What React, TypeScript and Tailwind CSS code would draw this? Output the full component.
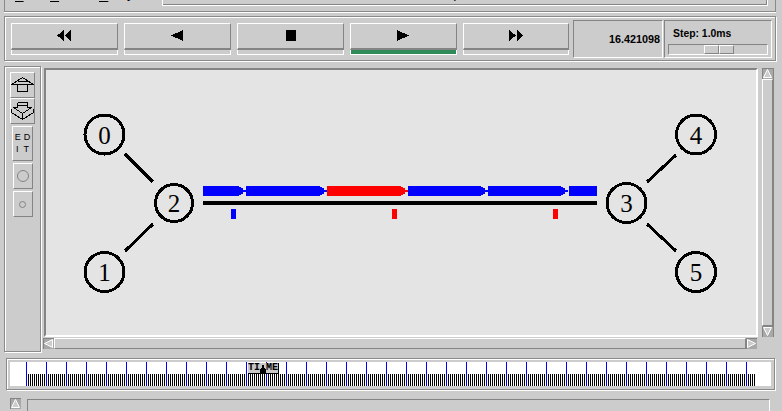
const raised = "border border-t-white border-l-white border-b-[#848484] border-r-[#848484]";
const sunken = "border border-t-[#848484] border-l-[#848484] border-b-white border-r-white";
const groove = "border border-[#8a8a8a] shadow-[inset_1px_1px_0_#ffffff,1px_1px_0_#ffffff]";

const blueTicks = Array.from({ length: 37 }, (_, i) => 26 + i * 20);
const blackTicks = Array.from({ length: 364 }, (_, i) => 28 + i * 2);

function TransportButton({ active, children, w }: { active?: boolean; children: React.ReactNode; w: string }) {
  return (
    <div className={`flex h-[32px] flex-col ${w}`}>
      <div className="flex h-[27px] items-center justify-center border-b-2 border-l border-r border-t border-t-white border-l-white border-b-[#848484] border-r-[#848484]">
        {children}
      </div>
      <div
        className={
          active
            ? "h-[5px] border-b border-l border-r border-white bg-[#2e8b57]"
            : "h-[5px] border-b border-l border-r border-white"
        }
      />
    </div>
  );
}

function Arrow({ dir }: { dir: "up" | "down" | "left" | "right" }) {
  const points = {
    up: "5.5,1.5 1.5,9.5 9.5,9.5",
    down: "1.5,1.5 9.5,1.5 5.5,9.5",
    left: "1.5,5.5 9.5,1.5 9.5,9.5",
    right: "1.5,1.5 1.5,9.5 9.5,5.5",
  }[dir];
  return (
    <div className="h-[11px] w-[11px] shrink-0 border-l border-t border-[#848484] bg-[#a8a8a8]">
      <svg width="10" height="10" viewBox="1 1 10 10" className="block">
        <polygon points={points} fill="#cccccc" stroke="#ffffff" />
      </svg>
    </div>
  );
}

function Packet({ x, w, color }: { x: number; w: number; color: string }) {
  const e = x + w;
  return (
    <polygon
      points={`${x},186 ${e - 7},186 ${e - 7},187 ${e - 5},187 ${e - 5},188 ${e - 3},188 ${e - 3},190 ${e - 1},190 ${e},191 ${e - 1},192 ${e - 3},192 ${e - 3},194 ${e - 5},194 ${e - 5},195 ${e - 7},195 ${e - 7},196 ${x},196`}
      fill={color}
    />
  );
}

function Node({ cx, cy, label, r = 19.5 }: { cx: number; cy: number; label: string; r?: number }) {
  return (
    <g>
      <circle cx={cx} cy={cy} r={r} fill="none" stroke="#000" strokeWidth={3} shapeRendering="crispEdges" />
      <text
        x={cx}
        y={cy + 9}
        textAnchor="middle"
        fontSize={25}
        fontFamily="'Liberation Serif', serif"
        fill="#000"
      >
        {label}
      </text>
    </g>
  );
}

export default function App() {
  return (
    <div className="flex h-[411px] w-[782px] flex-col overflow-hidden bg-[#cccccc] font-['Liberation_Sans',sans-serif] text-black">
      {/* menu strip, mostly scrolled off the top */}
      <div className="ml-[4px] flex h-[12px] w-[772px] shrink-0 overflow-hidden border-b border-l border-r border-[#8a8a8a] shadow-[0_1px_0_#ffffff]">
        <div className="h-[6px] w-[157px] shrink-0 overflow-hidden text-[14px] leading-[16px]">
          <div className="-mt-[15px] flex underline-offset-[3px]">
            <span className="ml-[10px] w-[35px]"><span className="underline">F</span>ile</span>
            <span className="w-[49px]"><span className="underline">V</span>iews</span>
            <span><span className="underline">A</span>nalysis</span>
          </div>
        </div>
        <div className="h-[6px] w-[606px] overflow-hidden border-b border-l border-r border-b-white border-l-white border-r-white text-center text-[14px] leading-[16px] shadow-[inset_-1px_-1px_0_#848484]">
          <div className="-mt-[15px]">tmp.nam</div>
        </div>
      </div>

      {/* transport bar */}
      <div className={`ml-[4px] mt-[4px] flex h-[45px] w-[772px] shrink-0 items-center pl-[6px] ${groove}`}>
        <div className="flex gap-[6px]">
          <TransportButton w="w-[107px]">
            <svg width="15" height="11" viewBox="0 0 15 11" shapeRendering="crispEdges">
              <polygon points="7,0 7,11 0,5.5" fill="#000" />
              <polygon points="14,0 14,11 8,5.5" fill="#000" />
            </svg>
          </TransportButton>
          <TransportButton w="w-[107px]">
            <svg width="13" height="11" viewBox="0 0 13 11" shapeRendering="crispEdges"><polygon points="12,0 12,11 0,5.5" fill="#000" /></svg>
          </TransportButton>
          <TransportButton w="w-[107px]">
            <div className="h-[11px] w-[10px] bg-black" />
          </TransportButton>
          <TransportButton w="w-[107px]" active>
            <svg width="13" height="11" viewBox="0 0 13 11" shapeRendering="crispEdges"><polygon points="0,0 0,11 12,5.5" fill="#000" /></svg>
          </TransportButton>
          <TransportButton w="w-[106px]">
            <svg width="15" height="11" viewBox="0 0 15 11" shapeRendering="crispEdges">
              <polygon points="0,0 0,11 7,5.5" fill="#000" />
              <polygon points="8,0 8,11 14,5.5" fill="#000" />
            </svg>
          </TransportButton>
        </div>
        <div className={`ml-[4px] flex h-[38px] w-[90px] items-center justify-end pr-[2px] pt-[1px] text-[10.8px] font-bold ${sunken}`}>
          16.421098
        </div>
        <div className={`ml-[1px] h-[38px] w-[108px] ${sunken}`}>
          <div className="ml-[8px] mt-[7px] text-[10.4px] font-bold leading-[12px]">Step: 1.0ms</div>
          <div className={`ml-[3px] mt-[4px] flex h-[11px] w-[100px] ${sunken}`}>
            <div className="ml-[35px] flex h-[9px]">
              <div className={`h-[9px] w-[15px] ${raised}`} />
              <div className={`h-[9px] w-[15px] ${raised}`} />
            </div>
          </div>
        </div>
      </div>

      {/* main area */}
      <div className="ml-[4px] mt-[5px] flex h-[287px] shrink-0">
        <div className={`flex h-[286px] w-[37px] shrink-0 flex-col items-center pt-[5px] ${groove}`}>
          <div className={`flex h-[26px] w-[25px] items-center justify-center ${raised}`}>
            <svg width="23" height="16" viewBox="0 0 23 16" shapeRendering="crispEdges">
              <path d="M11.5 0.5 L0.5 7.5 L6.5 7.5 M11.5 0.5 L22.5 7.5 L16.5 7.5 M6.5 4.5 L16.5 4.5 M0.5 7.5 L22.5 7.5 M6.5 7.5 L6.5 14.5 L16.5 14.5 L16.5 7.5" fill="none" stroke="#000" strokeWidth={1} />
            </svg>
          </div>
          <div className={`flex h-[26px] w-[25px] items-center justify-center ${raised}`}>
            <svg width="23" height="18" viewBox="0 0 23 18" shapeRendering="crispEdges">
              <path d="M6.5 0.5 L16.5 0.5 M6.5 3.5 L16.5 3.5 M6.5 0.5 L6.5 5.5 L2.5 5.5 L11.5 11.5 L20.5 5.5 L16.5 5.5 L16.5 0.5 M0.5 6.5 L0.5 10.5 L11.5 17.5 L22.5 10.5 L22.5 6.5 M11.5 11.5 L11.5 17.5" fill="none" stroke="#000" strokeWidth={1} />
            </svg>
          </div>
          <div className={`mt-[2px] flex h-[35px] w-[21px] flex-col items-center justify-center gap-[3px] text-[9px] leading-[9px] ${raised}`}>
            <div className="flex gap-[3px]"><span>E</span><span>D</span></div>
            <div className="flex gap-[5px]"><span>I</span><span>T</span></div>
          </div>
          <div className={`mt-[2px] flex h-[26px] w-[20px] items-center justify-center ${raised}`}>
            <div className="h-[12px] w-[12px] rounded-full border border-[#848484]" />
          </div>
          <div className={`mt-[2px] flex h-[26px] w-[20px] items-center justify-center ${raised}`}>
            <div className="h-[7px] w-[7px] rounded-full border border-[#848484]" />
          </div>
        </div>

        <div className="ml-[2px] mt-[2px] flex flex-col">
          <div className="flex">
            <div className="ml-[1px] h-[269px] w-[714px] overflow-hidden border-2 border-b-white border-l-[#848484] border-r-white border-t-[#848484] bg-[#e4e4e4]">
              <svg width="710" height="265" viewBox="46 70 710 265" className="block">
                <g shapeRendering="crispEdges">
                  <g stroke="#000" strokeWidth={3}>
                    <line x1={125} y1={154} x2={153} y2={182} />
                    <line x1={153} y1={224} x2={125} y2={251} />
                    <line x1={647} y1={182} x2={676} y2={155} />
                    <line x1={647} y1={224} x2={676} y2={251} />
                  </g>
                  <rect x={203} y={201} width={394} height={4} fill="#000" />
                  <Packet x={203} w={43} color="#0000ff" />
                  <Packet x={246} w={81} color="#0000ff" />
                  <Packet x={327} w={81} color="#ff0000" />
                  <Packet x={408} w={80} color="#0000ff" />
                  <Packet x={488} w={80} color="#0000ff" />
                  <rect x={569} y={186} width={28} height={10} fill="#0000ff" />
                  <rect x={231} y={209} width={5} height={10} fill="#0000ff" />
                  <rect x={392} y={209} width={5} height={10} fill="#ff0000" />
                  <rect x={553} y={209} width={5} height={10} fill="#ff0000" />
                </g>
                <Node cx={104.5} cy={134.5} label="0" />
                <Node cx={104.5} cy={272} label="1" />
                <Node cx={174} cy={203} label="2" r={18.5} />
                <Node cx={626.5} cy={203} label="3" />
                <Node cx={696} cy={134.5} label="4" />
                <Node cx={696} cy={272} label="5" />
              </svg>
            </div>
            <div className="ml-[4px] flex h-[269px] w-[12px] flex-col items-center border-r border-[#848484]">
              <Arrow dir="up" />
              <div className={`w-[11px] flex-1 ${raised}`} />
              <Arrow dir="down" />
            </div>
          </div>
          <div className="mt-[1px] flex h-[11px] w-[714px] border-b border-[#848484]">
            <Arrow dir="left" />
            <div className={`h-[11px] flex-1 ${raised}`} />
            <Arrow dir="right" />
          </div>
        </div>
      </div>

      {/* time slider */}
      <div className={`ml-[6px] mt-[5px] h-[32px] w-[769px] shrink-0 p-[3px] ${groove}`}>
        <div className="h-[24px] w-[761px] overflow-hidden bg-white">
          <div className="relative h-[24px] w-[761px]">
            <svg width="761" height="24" viewBox="10 362 761 24" className="block" shapeRendering="crispEdges">
              {blackTicks.map((x) => (
                <rect key={x} x={x} y={374} width={1} height={12} fill="#000" />
              ))}
              {blueTicks.map((x) => (
                <rect key={x} x={x} y={362} width={1} height={24} fill="#0000ff" />
              ))}
            </svg>
            <div className="absolute left-[238px] top-[1px] flex h-[11px] w-[31px] items-center justify-between overflow-hidden border-b border-r border-black bg-[#c8c8c8] font-['Liberation_Mono',monospace] text-[10px] font-bold leading-none">
              <span>TI</span>
              <svg width="6" height="10" viewBox="0 0 6 10" shapeRendering="crispEdges" className="shrink-0">
                <polygon points="3,0 4,4 6,7 6,10 0,10 0,7 2,4" fill="#000" />
              </svg>
              <span>ME</span>
            </div>
          </div>
        </div>
      </div>

      {/* bottom scrollbar, cut off by the window */}
      <div className="ml-[10px] mt-[8px] flex h-[12px] shrink-0">
        <Arrow dir="up" />
        <div className={`ml-[6px] mt-[1px] h-[14px] w-[743px] ${sunken}`} />
      </div>
    </div>
  );
}
